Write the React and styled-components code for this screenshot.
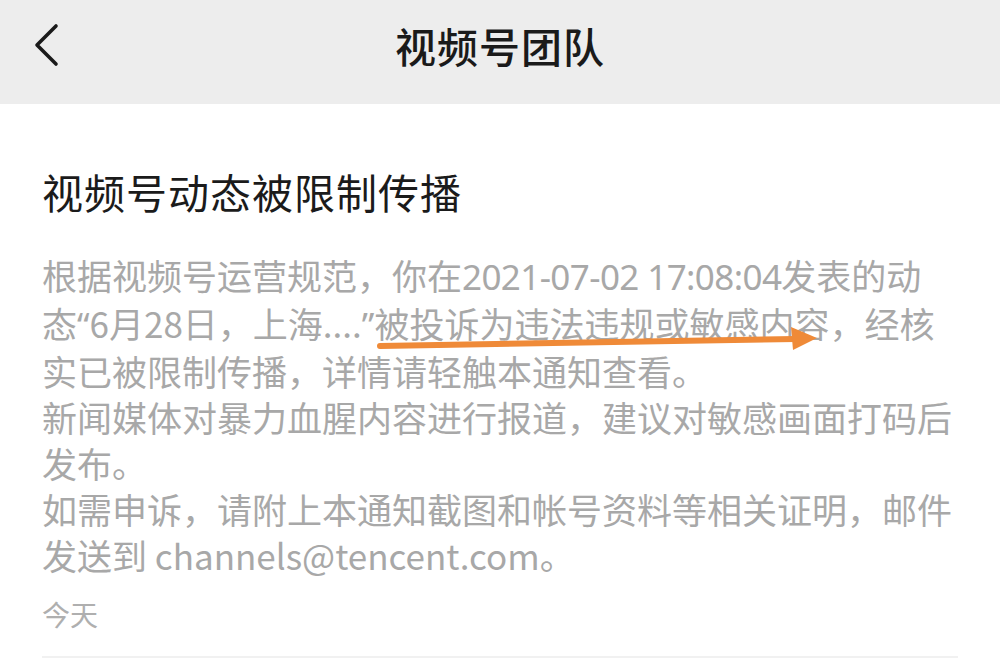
import React from "react";
import styled, { createGlobalStyle } from "styled-components";

const Global = createGlobalStyle`
  html, body { margin: 0; padding: 0; background: #ffffff; }
  body { font-family: "Noto Sans CJK SC", "Noto Sans", sans-serif; }
`;

const Page = styled.div`
  position: relative;
  width: 1000px;
  height: 663px;
  overflow: hidden;
  background: #ffffff;
`;

const Header = styled.header`
  height: 104px;
  background: #ededed;
  display: grid;
  grid-template-columns: 120px 1fr 120px;
  align-items: start;
  padding-top: 17px;
  box-sizing: border-box;
`;

const BackButton = styled.div`
  display: flex;
  align-items: center;
  height: 56px;
  padding-left: 34px;
`;

const HeaderTitle = styled.h1`
  margin: 0;
  text-align: center;
  font-size: 41px;
  line-height: 56px;
  font-weight: 500;
  color: #1a1a1a;
  letter-spacing: 1px;
`;

const Content = styled.main`
  padding: 0 42px;
`;

const MessageTitle = styled.h2`
  margin: 59px 0 0;
  font-size: 41px;
  line-height: 56px;
  font-weight: 400;
  color: #1b1b1b;
  letter-spacing: 1px;
`;

const Body = styled.div`
  margin-top: 33px;
  font-size: 35px;
  line-height: 46px;
  color: #a8a8a8;
`;

const Line = styled.div`
  white-space: nowrap;
`;

const Latin = styled.span`
  font-family: "Noto Sans", sans-serif;
  letter-spacing: ${(p) => p.$spacing || "0px"};
`;

const Time = styled.div`
  margin-top: 18px;
  font-size: 28px;
  line-height: 36px;
  color: #afafaf;
`;

const Divider = styled.div`
  margin-top: 24px;
  height: 2px;
  background: #f1f1f1;
`;

const Overlay = styled.svg`
  position: absolute;
  left: 0;
  top: 0;
  pointer-events: none;
`;

export default function App() {
  return (
    <Page>
      <Global />
      <Header>
        <BackButton>
          <svg width="26" height="44" viewBox="0 0 26 44">
            <path d="M22 3 L3 22 L22 41" fill="none" stroke="#1a1a1a" strokeWidth="3.6" strokeLinecap="round" strokeLinejoin="round" />
          </svg>
        </BackButton>
        <HeaderTitle>视频号团队</HeaderTitle>
        <div />
      </Header>
      <Content>
        <MessageTitle>视频号动态被限制传播</MessageTitle>
        <Body>
          <Line>根据视频号运营规范，你在<Latin $spacing="-0.6px">2021-07-02 17:08:04</Latin>发表的动</Line>
          <Line>态<Latin>“</Latin>6月28日，上海....<Latin>”</Latin>被投诉为违法违规或敏感内容，经核</Line>
          <Line>实已被限制传播，详情请轻触本通知查看。</Line>
          <Line>新闻媒体对暴力血腥内容进行报道，建议对敏感画面打码后</Line>
          <Line>发布。</Line>
          <Line>如需申诉，请附上本通知截图和帐号资料等相关证明，邮件</Line>
          <Line>发送到 channels@tencent.com。</Line>
        </Body>
        <Time>今天</Time>
        <Divider />
      </Content>
      <Overlay width="1000" height="663" viewBox="0 0 1000 663">
        <path d="M380 346 L796 339" stroke="#ef8a38" strokeWidth="6" strokeLinecap="round" fill="none" />
        <path d="M817 338 L791 327 L793 350 Z" fill="#ef8a38" />
      </Overlay>
    </Page>
  );
}
